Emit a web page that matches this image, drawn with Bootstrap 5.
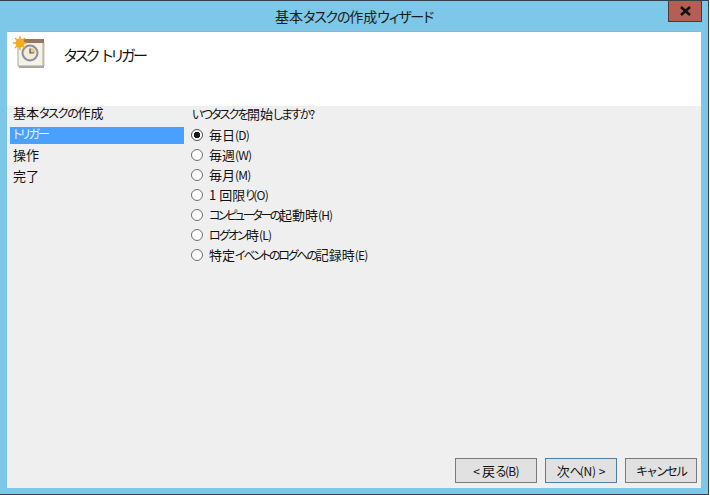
<!DOCTYPE html>
<html lang="ja">
<head>
<meta charset="utf-8">
<title>基本タスクの作成ウィザード</title>
<link href="https://cdn.jsdelivr.net/npm/bootstrap@5.3.0/dist/css/bootstrap.min.css" rel="stylesheet">
<style>
html,body{height:100%;margin:0;overflow:hidden}
body{background:#fff;font-family:"Noto Sans CJK JP","Liberation Sans",sans-serif;font-size:13px;color:#111;font-feature-settings:"palt"}
.wiz-window{width:709px;height:495px;background:#7dc7e9;border-top:1px solid #3a4048;border-right:1px solid #3a4048;border-bottom:1px solid #3a4048;display:flex;flex-direction:column;position:relative}
.wiz-title{height:30px;line-height:30px;font-size:14px;color:#1a1a1a;text-align:center}
.wiz-k{font-size:12px;letter-spacing:-1.8px}
.wiz-l{font-size:12px;letter-spacing:-.8px}
.wiz-title .wiz-k{font-size:14px;letter-spacing:-1.2px}
.wiz-close{position:absolute;top:0;right:6px;width:34px;height:21px;background:#b55f54;border:1px solid #4a3a3e;border-top:0;display:flex;align-items:center;justify-content:center}
.wiz-client{margin:0 7px 0 7px;height:457px;display:flex;flex-direction:column;background:#efefef;border-top:1px solid #8db6d6}
.wiz-head{height:74px;background:#fff;padding:4px 0 0 6px;display:flex;align-items:flex-start;gap:18px}
.wiz-head-text{font-size:15px;line-height:20px;padding-top:9px;color:#111;letter-spacing:-2.2px;word-spacing:3px}
.wiz-body{flex:1;display:flex;min-height:0;position:relative}
.wiz-side{width:174px;margin-left:3px;flex:none}
.wiz-step{height:21px;line-height:13px;padding:0 3px;white-space:nowrap}
.wiz-step .wiz-k{letter-spacing:-1.3px}
.wiz-step-on{background:#4aa0fe;color:#e9f3ff;height:17px;margin-bottom:4px}
.wiz-step-on .wiz-k{letter-spacing:-1.8px}
.wiz-main{padding:0 0 0 7px;flex:1;display:flex;flex-direction:column}
.wiz-ask{line-height:16px;margin-bottom:3px;padding-left:1px}
.wiz-radio{height:20px;margin:0;padding:0;display:flex;align-items:center;gap:6px;min-height:0}
.wiz-radio .form-check-input{float:none;margin:0;width:12px;height:12px;flex:none;background-color:#fff;border:1px solid #6f6f6f;border-radius:50%;background-image:none}
.wiz-radio .form-check-input:checked{background-color:#fff;border-color:#4d4d4d;background-image:radial-gradient(circle,#1a1a1a 0 3px,transparent 3.4px)}
.wiz-radio .form-check-label{line-height:16px;white-space:nowrap}
.wiz-radio .wiz-k-tight{letter-spacing:-2.4px}
.wiz-radio .wiz-k-mid{letter-spacing:-2.2px}
.wiz-foot{display:flex;justify-content:flex-end;gap:8px;padding:0 4px 5px 0}
.wiz-btn{height:25px;width:72px;padding:0;border-radius:0;background:#e1e1e1;border:1px solid #7a7a7a;font-size:13px;line-height:20px;color:#111}
.wiz-btn .wiz-k{letter-spacing:-2px}
.wiz-btn-wide{width:82px}
.wiz-btn-main{border-color:#4f7ea8}
.wiz-btn-main .wiz-l{letter-spacing:-.2px}
</style>
</head>
<body>
<div class="wiz-window">
  <div class="wiz-title">基本<span class="wiz-k">タスクの</span>作成<span class="wiz-k">ウィザード</span></div>
  <div class="wiz-close"><svg width="13" height="10" viewBox="0 0 13 10"><path d="M2 1l9 8M11 1L2 9" stroke="#111" stroke-width="2.6" fill="none"/></svg></div>
  <div class="wiz-client">
    <div class="wiz-head">
      <svg width="33" height="34" viewBox="0 0 33 34">
        <rect x="6" y="28" width="25" height="4" fill="#a9a7a4"/>
        <rect x="5" y="5" width="25" height="25" fill="#f6f2e6" stroke="#a9a59c"/>
        <rect x="30" y="6" width="1.500" height="24" fill="#c9b9a8"/>
        <rect x="9" y="3" width="22" height="4" fill="#9a7564"/>
        <circle cx="17" cy="17" r="7.500" fill="#eceae6" stroke="#8b8f98" stroke-width="2"/>
        <circle cx="17" cy="17" r="5.500" fill="#f5ecd8"/>
        <path d="M17 17h5.500a5.500 5.500 0 0 0-5.500-5.500z" fill="#e6c98f"/>
        <path d="M17 12.500v4.500h4" stroke="#55575c" stroke-width="1.200" fill="none"/>
        <g stroke="#f0a818" stroke-width="1.400"><path d="M7 0v14M0 7h14M2 2l10 10M12 2L2 12"/></g>
        <circle cx="7" cy="7" r="4.500" fill="#f5ab1c"/>
      </svg>
      <div class="wiz-head-text">タスク トリガー</div>
    </div>
    <div class="wiz-body">
      <div class="wiz-side">
        <div class="wiz-step">基本<span class="wiz-k">タスクの</span>作成</div>
        <div class="wiz-step wiz-step-on"><span class="wiz-k">トリガー</span></div>
        <div class="wiz-step">操作</div>
        <div class="wiz-step">完了</div>
      </div>
      <div class="wiz-main">
        <div class="wiz-ask"><span class="wiz-k">いつタスクを</span>開始<span class="wiz-k">しますか</span><span class="wiz-l">?</span></div>
        <div class="form-check wiz-radio"><input class="form-check-input" type="radio" name="t" id="r1" checked><label class="form-check-label" for="r1">毎日<span class="wiz-l">(D)</span></label></div>
        <div class="form-check wiz-radio"><input class="form-check-input" type="radio" name="t" id="r2"><label class="form-check-label" for="r2">毎週<span class="wiz-l">(W)</span></label></div>
        <div class="form-check wiz-radio"><input class="form-check-input" type="radio" name="t" id="r3"><label class="form-check-label" for="r3">毎月<span class="wiz-l">(M)</span></label></div>
        <div class="form-check wiz-radio"><input class="form-check-input" type="radio" name="t" id="r4"><label class="form-check-label" for="r4">1 回限<span class="wiz-k">り</span><span class="wiz-l">(O)</span></label></div>
        <div class="form-check wiz-radio"><input class="form-check-input" type="radio" name="t" id="r5"><label class="form-check-label" for="r5"><span class="wiz-k wiz-k-tight">コンピューターの</span>起動時<span class="wiz-l">(H)</span></label></div>
        <div class="form-check wiz-radio"><input class="form-check-input" type="radio" name="t" id="r6"><label class="form-check-label" for="r6"><span class="wiz-k">ログオン</span>時<span class="wiz-l">(L)</span></label></div>
        <div class="form-check wiz-radio"><input class="form-check-input" type="radio" name="t" id="r7"><label class="form-check-label" for="r7">特定<span class="wiz-k wiz-k-mid">イベントのログへの</span>記録時<span class="wiz-l">(E)</span></label></div>
      </div>
    </div>
    <div class="wiz-foot">
      <button type="button" class="btn wiz-btn wiz-btn-wide"><span class="wiz-l">&lt;</span> 戻<span class="wiz-k">る</span><span class="wiz-l">(B)</span></button>
      <button type="button" class="btn wiz-btn wiz-btn-main">次<span class="wiz-k">へ</span><span class="wiz-l">(N)</span> <span class="wiz-l">&gt;</span></button>
      <button type="button" class="btn wiz-btn"><span class="wiz-k">キャンセル</span></button>
    </div>
  </div>
</div>
<script src="https://cdn.jsdelivr.net/npm/bootstrap@5.3.0/dist/js/bootstrap.bundle.min.js"></script>
</body>
</html>
